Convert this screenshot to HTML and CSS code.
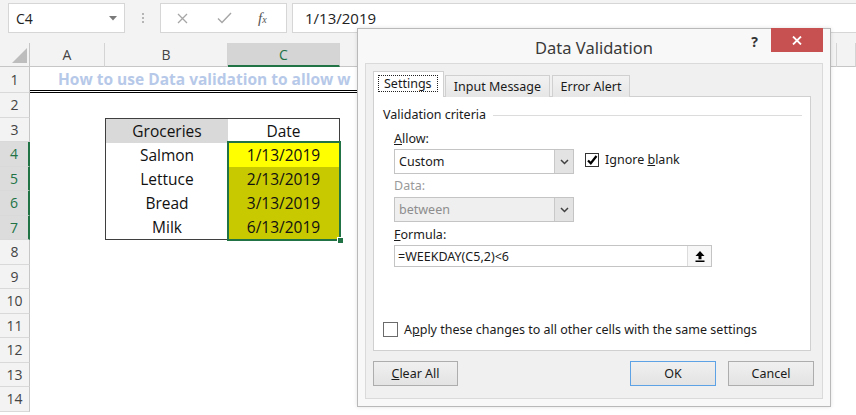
FILE: index.html
```html
<!DOCTYPE html>
<html>
	<head>
		<meta charset="UTF-8">
		<title>Data Validation</title>
		<link rel="stylesheet" href="styles.css">
	</head>
	<body>
		<div class="app">
			<div class="topbar">
				<div class="namebox">
					<span>C4</span>
					<svg width="8" height="5" viewBox="0 0 8 5"><path d="M0 0H8L4 4.5Z" fill="#7a7a7a"/></svg>
				</div>
				<div class="grip"><i></i><i></i><i></i></div>
				<div class="fxbox">
					<svg class="fx_cancel" width="11" height="11" viewBox="0 0 11 11"><path d="M1 1L10 10M10 1L1 10" stroke="#a6a6a6" stroke-width="1.3"/></svg>
					<svg class="fx_enter" width="15" height="12" viewBox="0 0 15 12"><path d="M1 6.5L5 10.5L14 1" stroke="#a6a6a6" stroke-width="1.4" fill="none"/></svg>
					<span class="fx">f<sub>x</sub></span>
				</div>
				<div class="formula">1/13/2019</div>
			</div>

			<div class="sheet">
				<div class="rowheads">
					<div class="corner"><svg width="15" height="15" viewBox="0 0 15 15"><path d="M15 0V15H0Z" fill="#bdbdbd"/></svg></div>
					<div class="rowhead r1">1</div>
					<div class="rowhead">2</div>
					<div class="rowhead">3</div>
					<div class="rowhead sel">4</div>
					<div class="rowhead sel">5</div>
					<div class="rowhead sel">6</div>
					<div class="rowhead sel">7</div>
					<div class="rowhead">8</div>
					<div class="rowhead">9</div>
					<div class="rowhead">10</div>
					<div class="rowhead">11</div>
					<div class="rowhead">12</div>
					<div class="rowhead">13</div>
					<div class="rowhead">14</div>
				</div>
				<div class="cells">
					<div class="colhead">A</div>
					<div class="colhead">B</div>
					<div class="colhead sel">C</div>
					<div class="colhead"></div>
					<div class="colhead"></div>

					<div class="sheet_title"><span>How to use Data validation to allow w</span></div>

					<div class="grocery_table">
						<div class="cell head">Groceries</div>
						<div class="cell">Date</div>
						<div class="cell">Salmon</div>
						<div class="cell active">1/13/2019</div>
						<div class="cell">Lettuce</div>
						<div class="cell marked">2/13/2019</div>
						<div class="cell">Bread</div>
						<div class="cell marked">3/13/2019</div>
						<div class="cell">Milk</div>
						<div class="cell marked">6/13/2019</div>
					</div>

					<div class="selection"><span class="handle"></span></div>
				</div>
			</div>

			<div class="dialog">
				<div class="titlebar">
					<span></span>
					<span class="title">Data Validation</span>
					<div class="tools">
						<span class="help">?</span>
						<span class="close"><svg width="10" height="9" viewBox="0 0 10 9"><path d="M1 0.5L9 8.5M9 0.5L1 8.5" stroke="#fff" stroke-width="1.8"/></svg></span>
					</div>
				</div>
				<div class="client">
					<div class="tabs">
						<div class="tab active"><span class="focus">Settings</span></div>
						<div class="tab tab_input">Input Message</div>
						<div class="tab tab_error">Error Alert</div>
					</div>
					<div class="panel">
						<div class="group_title"><span>Validation criteria</span></div>
						<div class="fields">
							<div class="label"><u>A</u>llow:</div>
							<div class="allow_row">
								<div class="select">
									<span>Custom</span>
									<span class="drop"><svg width="9" height="6" viewBox="0 0 9 6"><path d="M1 1L4.5 4.5L8 1" stroke="#404040" stroke-width="1.5" fill="none"/></svg></span>
								</div>
								<div class="check ignore">
									<span class="box"><svg width="12" height="12" viewBox="0 0 12 12"><path d="M2 6.5L4.8 9.3L10.5 2" stroke="#000" stroke-width="2.2" fill="none"/></svg></span>
									<span>Ignore <u>b</u>lank</span>
								</div>
							</div>
							<div class="label disabled">Data:</div>
							<div class="select disabled">
								<span>between</span>
								<span class="drop"><svg width="9" height="6" viewBox="0 0 9 6"><path d="M1 1L4.5 4.5L8 1" stroke="#404040" stroke-width="1.5" fill="none"/></svg></span>
							</div>
							<div class="label formula_label"><u>F</u>ormula:</div>
							<div class="input">
								<span>=WEEKDAY(C5,2)&lt;6</span>
								<span class="pick"><svg width="10" height="11" viewBox="0 0 10 11"><path d="M5 0L9.5 5H6.5V8.2H3.5V5H0.5Z" fill="#000"/><rect x="0.5" y="9.5" width="9" height="1.5" fill="#000"/></svg></span>
							</div>
						</div>
						<div class="check apply">
							<span class="box"></span>
							<span>A<u>p</u>ply these changes to all other cells with the same settings</span>
						</div>
					</div>
					<div class="buttons">
						<span class="button"><u>C</u>lear All</span>
						<span class="spacer"></span>
						<span class="button default">OK</span>
						<span class="button">Cancel</span>
					</div>
				</div>
			</div>
		</div>
	</body>
</html>
```

FILE: styles.css
```css
body {
	margin: 0;
	font-family: "Open Sans", sans-serif;
	background: #fff;
	overflow: hidden;
}

.app {
	position: relative;
	width: 856px;
	height: 415px;
	overflow: hidden;
}

/* formula bar */
.topbar {
	display: flex;
	height: 43px;
	box-sizing: border-box;
	padding: 3px 0 10px 8px;
	background: #f3f3f3;
}

.namebox {
	width: 117px;
	box-sizing: border-box;
	border: 1px solid #d6d6d6;
	background: #fff;
	display: flex;
	align-items: center;
	justify-content: space-between;
	padding: 0 7px 0 7px;
	font-size: 14px;
	color: #222;
}

.grip {
	width: 35px;
	display: flex;
	flex-direction: column;
	align-items: center;
	justify-content: center;
	gap: 2px;
}

.grip i {
	width: 2px;
	height: 2px;
	background: #b5b5b5;
}

.fxbox {
	width: 127px;
	box-sizing: border-box;
	border: 1px solid #d6d6d6;
	background: #fff;
	display: flex;
	align-items: center;
}

.fx_cancel { margin-left: 16px; }
.fx_enter { margin-left: 29px; }

.fx {
	margin-left: 26px;
	font-family: "Liberation Serif", serif;
	font-style: italic;
	font-size: 15px;
	color: #555;
}

.fx sub {
	font-size: 10px;
	vertical-align: baseline;
}

.formula {
	flex: 1;
	margin-left: 5px;
	border: 1px solid #d6d6d6;
	border-right: none;
	background: #fff;
	padding-left: 12px;
	display: flex;
	align-items: center;
	font-size: 15px;
	color: #222;
}

/* grid */
.sheet {
	display: flex;
}

.rowheads {
	width: 30px;
	display: flex;
	flex-direction: column;
}

.corner, .rowhead, .colhead {
	box-sizing: border-box;
	background: #f3f3f3;
	display: flex;
	align-items: center;
	justify-content: center;
	font-size: 14px;
	color: #444;
}

.corner {
	height: 24px;
	border-right: 1px solid #c6c6c6;
	border-bottom: 1px solid #c6c6c6;
	align-items: flex-end;
	justify-content: flex-end;
	padding: 0 2px 3px 0;
}

.rowhead {
	height: 24.5px;
	border-right: 1px solid #c6c6c6;
	border-bottom: 1px solid #d9d9d9;
}

.rowhead.r1 { height: 26px; }

.rowhead.sel {
	background: #dcdcdc;
	color: #217346;
	border-right: 2px solid #217346;
}

.cells {
	flex: 1;
	display: grid;
	grid-template-columns: 75px 123px 112px 497px 1fr;
	grid-template-rows: 24px 26px repeat(13, 24.5px);
}

.colhead {
	border-right: 1px solid #d4d4d4;
	border-bottom: 1px solid #c6c6c6;
}

.colhead.sel {
	background: #d5d5d5;
	color: #217346;
	border-bottom: 2px solid #217346;
}

/* title row, the dialog covers the rest of it */
.sheet_title {
	grid-column: 1 / 5;
	grid-row: 2;
	margin-right: 480px;
	padding-left: 28px;
	border-bottom: 3px double #000;
	display: flex;
	align-items: center;
	font-size: 15.5px;
	font-weight: 700;
	color: #b7c9e9;
	white-space: nowrap;
	overflow: hidden;
}

.grocery_table {
	grid-column: 2 / 4;
	grid-row: 4 / 9;
	border: 1px solid #3f3f3f;
	display: grid;
	grid-template-columns: 122px 1fr;
	grid-template-rows: repeat(5, 1fr);
}

.cell {
	display: flex;
	align-items: center;
	justify-content: center;
	font-size: 15.5px;
	color: #111;
}

.cell.head { background: #d9d9d9; }
.cell.active { background: #ffff00; }
.cell.marked { background: #c9c900; }

.selection {
	grid-column: 3;
	grid-row: 5 / 9;
	margin: -1px;
	border: 2px solid #217346;
	position: relative;
	z-index: 1;
}

.handle {
	position: absolute;
	right: -5px;
	bottom: -5px;
	width: 5px;
	height: 5px;
	background: #217346;
	border: 1px solid #fff;
}

/* dialog */
.dialog {
	position: absolute;
	left: 357px;
	top: 28px;
	width: 474px;
	height: 379px;
	box-sizing: border-box;
	border: 1px solid #b9b9b9;
	background: #f8f8f8;
	box-shadow: 0 0 4px rgba(0, 0, 0, 0.12);
	font-family: "Noto Sans", sans-serif;
	font-size: 12.5px;
	color: #1a1a1a;
	display: flex;
	flex-direction: column;
}

.titlebar {
	height: 34px;
	display: grid;
	grid-template-columns: 1fr auto 1fr;
}

.title {
	align-self: center;
	padding-top: 2px;
	font-size: 16.5px;
	color: #3a3a3a;
}

.tools {
	display: flex;
	justify-content: flex-end;
	align-items: flex-start;
	padding-right: 7px;
}

.help {
	margin-top: 3px;
	font-size: 14px;
	font-weight: 700;
	color: #333;
}

.close {
	margin-left: 13px;
	margin-top: -1px;
	width: 52px;
	height: 24px;
	background: #c75050;
	display: flex;
	align-items: center;
	justify-content: center;
}

.client {
	flex: 1;
	margin: 0 7px 7px 7px;
	border: 1px solid #dadada;
	background: #f0f0f0;
	display: flex;
	flex-direction: column;
}

.tabs {
	display: flex;
	align-items: flex-end;
	height: 25px;
	margin: 8px 0 -1px 7px;
	position: relative;
	z-index: 1;
}

.tab {
	height: 22px;
	box-sizing: border-box;
	border: 1px solid #d0d0d0;
	border-bottom: none;
	background: linear-gradient(#f2f2f2, #e6e6e6);
	display: flex;
	align-items: center;
	justify-content: center;
}

.tab.active {
	width: 71px;
	height: 26px;
	background: #fff;
	justify-content: flex-start;
	padding: 0 0 2px 4px;
}

.focus {
	border: 1px dotted #222;
	padding: 0 5px;
	line-height: 15px;
}

.tab_input {
	width: 105px;
	margin-left: 1px;
}

.tab_error {
	width: 78px;
	margin-left: 2px;
}

.panel {
	width: 438px;
	height: 255px;
	margin-left: 7px;
	box-sizing: border-box;
	border: 1px solid #d0d0d0;
	background: #fff;
	display: flex;
	flex-direction: column;
}

.group_title {
	display: flex;
	align-items: center;
	margin: 10px 8px 0 9px;
	line-height: 16px;
}

.group_title::after {
	content: "";
	flex: 1;
	margin-left: 7px;
	border-top: 1px solid #dcdcdc;
}

.fields {
	display: flex;
	flex-direction: column;
	align-items: flex-start;
	padding-left: 20px;
	margin-top: 8px;
}

.label {
	line-height: 16px;
}

.label.disabled {
	margin-top: 4px;
	color: #9a9a9a;
}

.formula_label {
	margin-top: 5px;
}

.allow_row {
	display: flex;
	align-items: flex-start;
	margin-top: 2px;
}

.select {
	width: 180px;
	height: 25px;
	box-sizing: border-box;
	border: 1px solid #c4c4c4;
	background: #fff;
	display: flex;
	align-items: center;
	justify-content: space-between;
	padding-left: 4px;
}

.select.disabled {
	margin-top: 3px;
	background: #efefef;
	color: #8d8d8d;
}

.drop {
	width: 19px;
	height: 100%;
	box-sizing: border-box;
	border-left: 1px solid #c8c8c8;
	background: #e3e3e3;
	display: flex;
	align-items: center;
	justify-content: center;
}

.check {
	display: flex;
	align-items: center;
}

.box {
	width: 14px;
	height: 14px;
	box-sizing: border-box;
	border: 1px solid #333;
	background: #fff;
	display: flex;
	align-items: center;
	justify-content: center;
	margin-right: 6px;
}

.ignore {
	margin: 2px 0 0 11px;
}

.input {
	width: 318px;
	height: 22px;
	margin-top: 2px;
	box-sizing: border-box;
	border: 1px solid #c4c4c4;
	display: flex;
	align-items: center;
	justify-content: space-between;
	padding-left: 3px;
}

.pick {
	width: 24px;
	height: 100%;
	box-sizing: border-box;
	border-left: 1px solid #dcdcdc;
	background: #f7f7f7;
	display: flex;
	align-items: center;
	justify-content: center;
}

.apply {
	margin: auto 0 12px 9px;
}

.apply .box {
	width: 15px;
	height: 15px;
	border-color: #6b6b6b;
}

.buttons {
	display: flex;
	margin-top: 10px;
	padding: 0 8px 0 7px;
}

.spacer {
	flex: 1;
}

.button {
	width: 85px;
	height: 25px;
	box-sizing: border-box;
	border: 1px solid #adadad;
	background: linear-gradient(#f0f0f0, #e3e3e3);
	display: flex;
	align-items: center;
	justify-content: center;
}

.button.default {
	width: 86px;
	margin-right: 12px;
	border-color: #5ea2e6;
}

.button:last-child {
	width: 86px;
}
```
